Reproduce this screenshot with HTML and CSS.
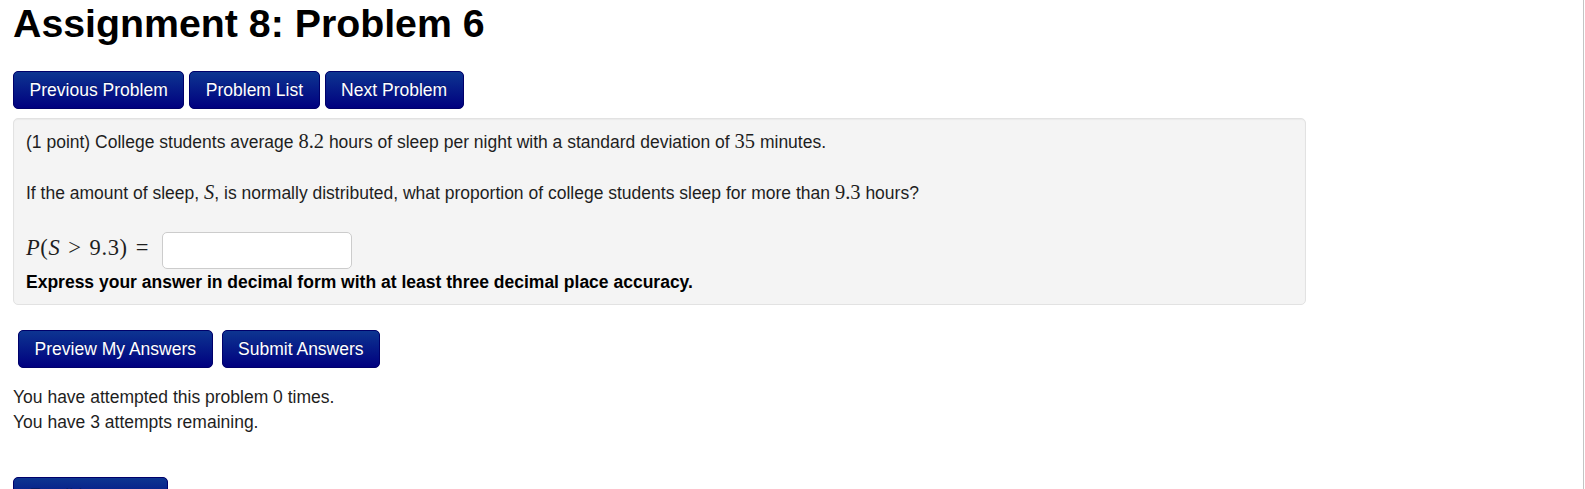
FILE: index.html
```html
<!DOCTYPE html>
<html lang="en">
<head>
    <meta charset="UTF-8">
    <title>Assignment 8: Problem 6</title>
    <link rel="stylesheet" href="styles.css">
</head>
<body>
    <div class="page">
        <h2 class="problem-title">Assignment 8: Problem 6</h2>
        <div class="nav-buttons">
            <a class="btn" href="#">Previous Problem</a>
            <a class="btn" href="#">Problem List</a>
            <a class="btn" href="#">Next Problem</a>
        </div>

        <div class="problem-box">
            (1 point) College students average <span class="math">8.2</span> hours of sleep per night with a standard deviation of <span class="math">35</span> minutes.<br><br>
            If the amount of sleep, <span class="math"><i>S</i></span>, is normally distributed, what proportion of college students sleep for more than <span class="math">9.3</span> hours?<br><br>
            <span class="math eq"><i>P</i>(<i>S</i><span class="op">&gt;</span>9.3)<span class="op">=</span></span>
            <input class="answer" type="text"><br>
            <b>Express your answer in decimal form with at least three decimal place accuracy.</b>
        </div>

        <div class="submit-buttons">
            <a class="btn" href="#">Preview My Answers</a>
            <a class="btn" href="#">Submit Answers</a>
        </div>

        <p class="attempts">
            You have attempted this problem 0 times.<br>
            You have 3 attempts remaining.
        </p>

        <div class="footer-buttons">
            <a class="btn" href="#">Email Instructor</a>
        </div>
    </div>
</body>
</html>
```

FILE: styles.css
```css
html, body {
    margin: 0;
    padding: 0;
    background-color: #fff;
}
body {
    font-family: "Liberation Sans", Arial, sans-serif;
    font-size: 17.5px;
    line-height: 25px;
    color: #1e1e1e;
    overflow: hidden;
}
.page {
    width: 1570px;
    height: 489px;
    padding-left: 13px;
    border-right: 1px solid #c4c4c4;
    overflow: hidden;
}
.problem-title {
    margin: 0;
    font-size: 39.3px;
    line-height: 47px;
    font-weight: bold;
    color: #000;
}
.nav-buttons {
    margin-top: 24px;
    height: 38px;
}
.btn {
    display: inline-block;
    padding: 5.5px 15.6px;
    font-size: 17.5px;
    line-height: 25px;
    color: #fff;
    text-decoration: none;
    text-shadow: 0 -1px 0 rgba(0, 0, 0, 0.25);
    background-color: #00087f;
    background-image: linear-gradient(to bottom, #0d3591, #00007f);
    border: 1px solid #00006a;
    border-radius: 5px;
    vertical-align: top;
}
.problem-box {
    width: 1267px;
    margin-top: 9px;
    padding: 10px 12px 9px 12px;
    background-color: #f4f4f4;
    border: 1px solid #e2e2e2;
    border-radius: 5px;
    box-shadow: inset 0 1px 1px rgba(0, 0, 0, 0.04);
}
.math {
    font-family: "Liberation Serif", "DejaVu Serif", serif;
    font-size: 20.5px;
}
.math i {
    font-style: italic;
}
.eq {
    font-size: 22.5px;
    letter-spacing: 0.6px;
}
.math .op {
    padding: 0 8px;
}
.answer {
    width: 190px;
    height: 37px;
    box-sizing: border-box;
    margin: 1px 0 1px 0;
    padding: 4px 6px;
    border: 1px solid #cccccc;
    border-radius: 5px;
    background-color: #fff;
    font-size: 17.5px;
    vertical-align: middle;
}
.problem-box b {
    color: #000;
}
.submit-buttons {
    margin-top: 25px;
    padding-left: 5px;
    height: 38px;
}
.submit-buttons .btn + .btn {
    margin-left: 4px;
}
.attempts {
    margin: 17px 0 0 0;
}
.footer-buttons {
    margin-top: 42px;
}
```
